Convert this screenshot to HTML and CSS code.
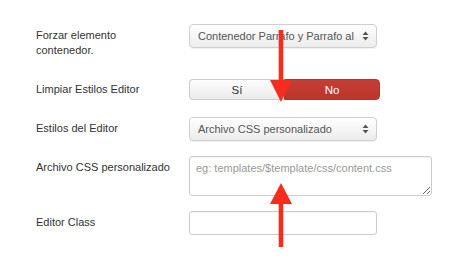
FILE: index.html
```html
<!DOCTYPE html>
<html lang="es">
<head>
<meta charset="utf-8">
<link rel="stylesheet" href="styles.css">
</head>
<body>
<div class="page">
  <form class="form">
    <div class="row row-first">
      <label class="label">Forzar elemento contenedor.</label>
      <div class="select">
        <span class="select-text">Contenedor Parrafo y Parrafo al</span>
        <svg class="caret" width="7" height="10" viewBox="0 0 7 10"><path d="M3.5 0.5 L6.5 4 L0.5 4 Z M0.5 6 L6.5 6 L3.5 9.5 Z" fill="#555"/></svg>
      </div>
    </div>
    <div class="row row-toggle">
      <label class="label label-toggle">Limpiar Estilos Editor</label>
      <div class="toggle">
        <span class="toggle-btn toggle-yes">Sí</span>
        <span class="toggle-btn toggle-no">No</span>
      </div>
    </div>
    <div class="row">
      <label class="label">Estilos del Editor</label>
      <div class="select">
        <span class="select-text">Archivo CSS personalizado</span>
        <svg class="caret" width="7" height="10" viewBox="0 0 7 10"><path d="M3.5 0.5 L6.5 4 L0.5 4 Z M0.5 6 L6.5 6 L3.5 9.5 Z" fill="#555"/></svg>
      </div>
    </div>
    <div class="row">
      <label class="label">Archivo CSS personalizado</label>
      <textarea class="textarea" placeholder="eg: templates/$template/css/content.css"></textarea>
    </div>
    <div class="row">
      <label class="label">Editor Class</label>
      <input class="input" type="text">
    </div>
  </form>
  <svg class="arrows" width="474" height="268" viewBox="0 0 474 268">
    <rect x="278.7" y="30" width="4.6" height="54" fill="#f62d1c"/>
    <polygon points="270,80 292,80 281,102" fill="#f62d1c"/>
    <polygon points="281,183 270,204 292,204" fill="#f62d1c"/>
    <rect x="278.7" y="202" width="4.6" height="45" fill="#f62d1c"/>
  </svg>
</div>
</body>
</html>
```
FILE: styles.css
```css
html, body {
  margin: 0;
  padding: 0;
  background: #ffffff;
}
.page {
  position: relative;
  width: 474px;
  height: 268px;
  overflow: hidden;
  font-family: "Liberation Sans", Arial, sans-serif;
  font-size: 11px;
  color: #333333;
}
.form {
  display: flex;
  flex-direction: column;
  padding: 24px 0 0 36px;
  margin: 0;
}
.row {
  display: flex;
  align-items: flex-start;
  margin-bottom: 15px;
}
.row-first .label {
  padding-bottom: 6px;
  width: 110px;
  margin-right: 43px;
}
.row-toggle {
  margin-bottom: 17px;
}
.label {
  width: 153px;
  flex: none;
  padding-top: 4px;
  line-height: 15px;
  color: #333333;
}
.label-toggle {
  padding-top: 3px;
}
.select {
  box-sizing: border-box;
  width: 188px;
  height: 24px;
  display: flex;
  align-items: center;
  justify-content: space-between;
  padding: 0 7px 0 8px;
  border: 1px solid #cfcfcf;
  border-radius: 4px;
  background: linear-gradient(#ffffff, #ececec);
  box-shadow: 0 1px 1px rgba(0, 0, 0, 0.06);
  color: #555555;
}
.select-text {
  white-space: nowrap;
  overflow: hidden;
}
.caret {
  flex: none;
}
.toggle {
  display: flex;
  width: 191px;
  height: 21px;
}
.toggle-btn {
  box-sizing: border-box;
  flex: 1;
  display: flex;
  align-items: center;
  justify-content: center;
  font-size: 11.5px;
}
.toggle-yes {
  border: 1px solid #cccccc;
  border-right: none;
  border-radius: 4px 0 0 4px;
  background: linear-gradient(#fdfdfd, #ebebeb);
  color: #333333;
}
.toggle-no {
  border: 1px solid #b3342c;
  border-radius: 0 4px 4px 0;
  background: linear-gradient(#c73d33, #bb352c);
  color: #ffffff;
}
.textarea {
  box-sizing: border-box;
  width: 243px;
  height: 40px;
  margin: 0;
  padding: 4px 6px;
  border: 1px solid #cccccc;
  border-radius: 3px;
  font-family: "Liberation Sans", Arial, sans-serif;
  font-size: 11px;
  line-height: 15px;
  color: #555555;
  background: #ffffff;
  box-shadow: inset 0 1px 1px rgba(0, 0, 0, 0.04);
}
.textarea::placeholder {
  color: #9a9a9a;
}
.input {
  box-sizing: border-box;
  width: 188px;
  height: 24px;
  margin: 0;
  padding: 2px 6px;
  border: 1px solid #cccccc;
  border-radius: 3px;
  font-family: "Liberation Sans", Arial, sans-serif;
  font-size: 11px;
  background: #ffffff;
  box-shadow: inset 0 1px 1px rgba(0, 0, 0, 0.04);
}
.arrows {
  position: absolute;
  left: 0;
  top: 0;
  pointer-events: none;
}
```
